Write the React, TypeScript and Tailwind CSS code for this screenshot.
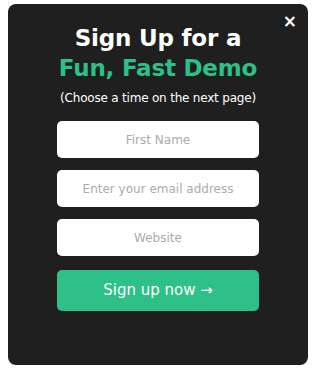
const font = { fontFamily: '"DejaVu Sans", "Noto Sans", sans-serif' };

const fields = ["First Name", "Enter your email address", "Website"];

export default function App() {
  return (
    <div className="pl-2 pt-1" style={font}>
      <div className="relative h-[361px] w-[300px] rounded-lg bg-[#1f1f1f]">
        <button
          type="button"
          aria-label="Close"
          className="absolute right-[11px] top-[9px] text-[17px] font-bold leading-none text-white"
        >
          ×
        </button>
        <div className="flex flex-col items-center pt-[19px]">
          <h2 className="text-center text-[23px] font-bold leading-[30px] tracking-[-0.2px] text-white">
            Sign Up for a
            <br />
            <span className="text-[#2dc088]">Fun, Fast Demo</span>
          </h2>
          <p className="mt-[7px] text-[12px] leading-[16px] tracking-[-0.2px] text-white">
            (Choose a time on the next page)
          </p>
          <form className="mt-[15px] flex w-[202px] flex-col gap-[12px]">
            {fields.map((f) => (
              <input
                key={f}
                placeholder={f}
                className="h-[37px] w-full rounded-[5px] bg-white text-center text-[12px] outline-none placeholder:text-[#ababab]"
              />
            ))}
            <button
              type="button"
              className="mt-[2px] h-[41px] w-full rounded-[5px] bg-[#2dc088] text-[15px] text-white"
            >
              Sign up now →
            </button>
          </form>
        </div>
      </div>
    </div>
  );
}
